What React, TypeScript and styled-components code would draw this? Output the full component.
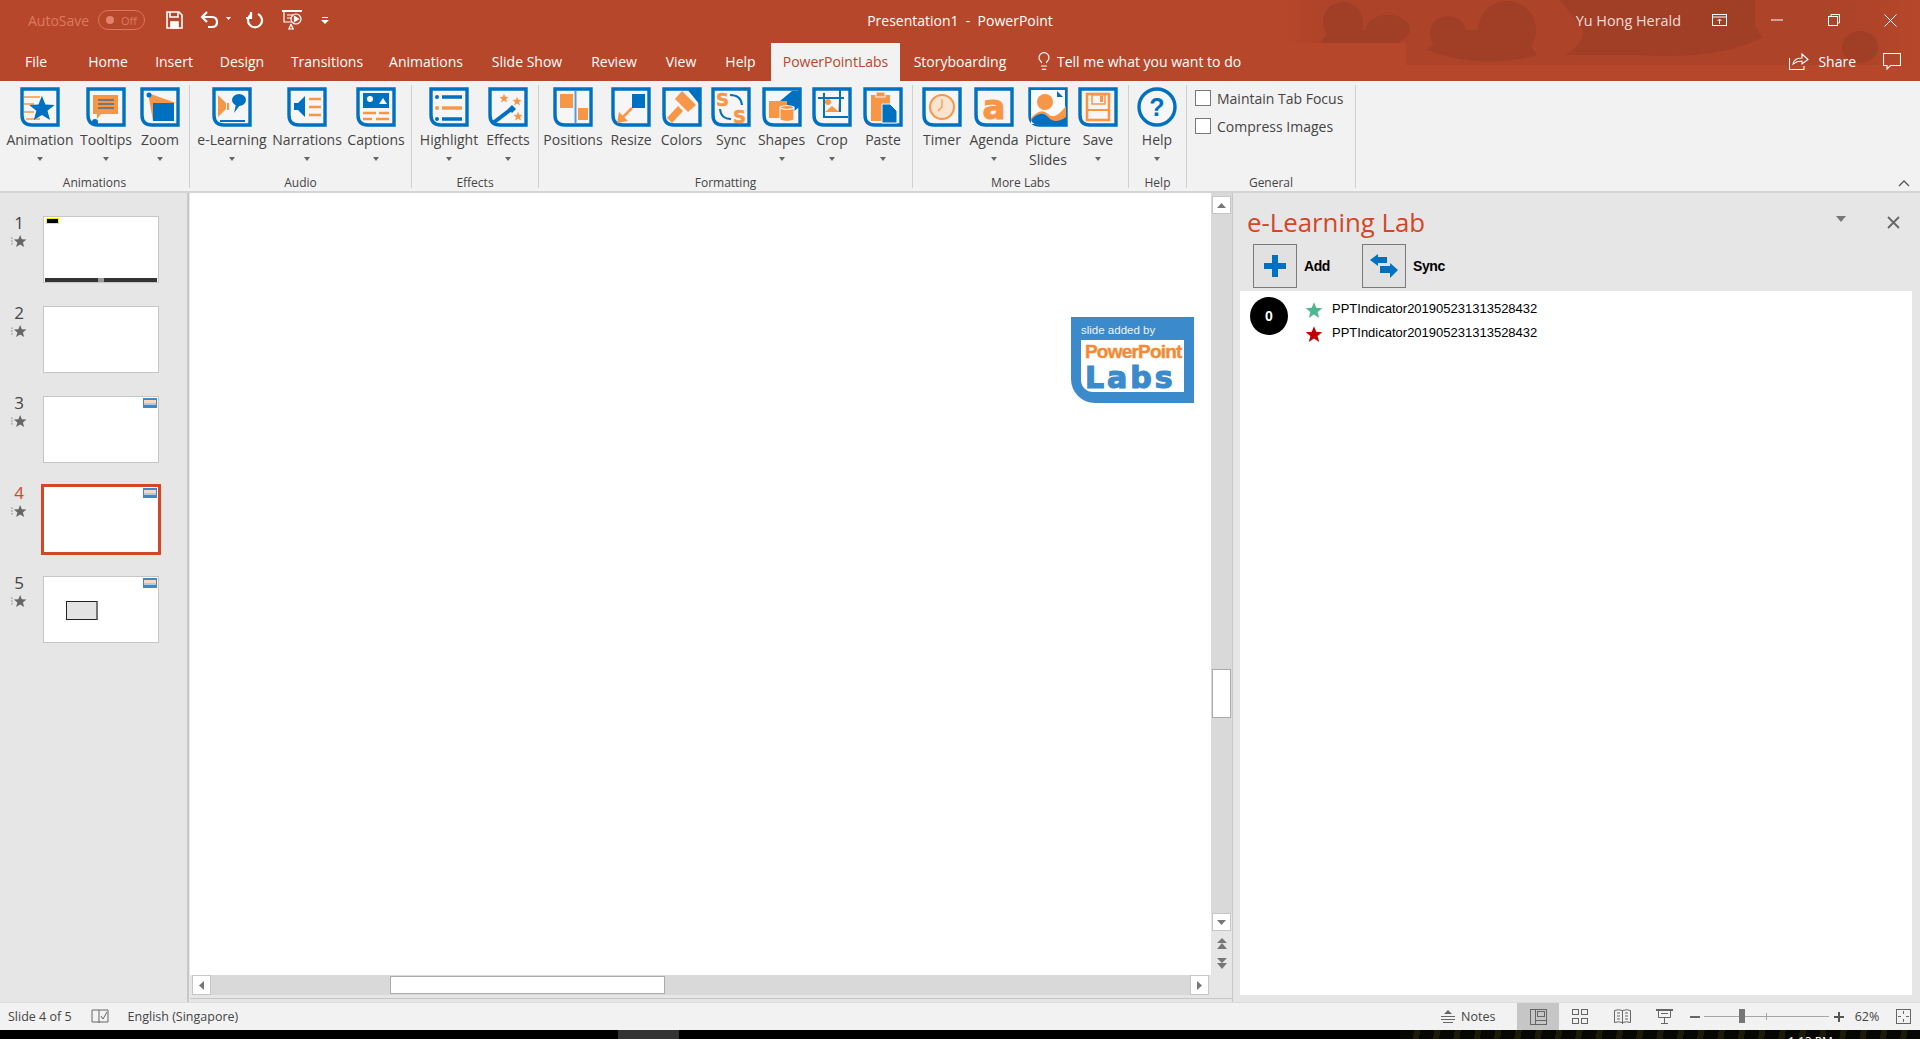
import React from 'react';
import styled, { createGlobalStyle } from 'styled-components';
import { Lightbulb } from 'lucide-react';

const BLUE = '#0070C0';
const ORANGE = '#F79646';
const STAR = '12,1.5 15,9 23,9.5 16.8,14.5 19,22.5 12,18 5,22.5 7.2,14.5 1,9.5 9,9';

const GlobalStyle = createGlobalStyle`
    html, body {
        margin: 0;
        padding: 0;
        background: #000;
    }
    body {
        font-family: 'Open Sans', 'Noto Sans', sans-serif;
        overflow: hidden;
    }
    * {
        box-sizing: border-box;
    }
`;

const Window = styled.div`
    display: flex;
    flex-direction: column;
    width: 1920px;
    height: 1039px;
    overflow: hidden;
`;

const Header = styled.header`
    position: relative;
    flex: none;
    height: 81px;
    background: #b7472a;
    color: #fff;
`;

const HeaderArt = styled.svg`
    position: absolute;
    top: 0;
    right: 0;
`;

const TitleBar = styled.div`
    position: relative;
    display: grid;
    grid-template-columns: 1fr auto 1fr;
    height: 43px;
    padding-bottom: 3px;
    align-items: center;
`;

const Qat = styled.div`
    display: flex;
    align-items: center;
    padding-left: 28px;
`;

const AutoSave = styled.span`
    width: 70px;
    font-size: 14px;
    color: #dc7a60;
`;

const Toggle = styled.div`
    display: flex;
    align-items: center;
    gap: 7px;
    width: 47px;
    height: 20px;
    padding-left: 7px;
    margin-right: 11px;
    border: 1px solid #d9765c;
    border-radius: 10px;
    font-size: 11px;
    color: #dc7a60;
`;

const ToggleDot = styled.i`
    width: 8px;
    height: 8px;
    border-radius: 50%;
    background: #e2826a;
`;

const QatButton = styled.div<{ $w: number }>`
    display: flex;
    align-items: center;
    justify-content: center;
    width: ${(p) => p.$w}px;
    height: 30px;
`;

const WindowTitle = styled.div`
    font-size: 14px;
    white-space: pre;
`;

const WindowRight = styled.div`
    display: flex;
    align-items: center;
    justify-content: flex-end;
    padding-right: 1px;
`;

const UserName = styled.span`
    margin-right: 31px;
    font-size: 14.4px;
    color: #f3dcd6;
`;

const DisplayOptions = styled.div`
    display: flex;
    margin-right: 21px;
`;

const WinButton = styled.div`
    display: flex;
    justify-content: center;
    width: 57px;
`;

const TabRow = styled.nav`
    position: relative;
    display: flex;
    height: 38px;
`;

const Tab = styled.div<{ $w: number; $active?: boolean }>`
    display: flex;
    align-items: center;
    justify-content: center;
    width: ${(p) => p.$w}px;
    padding-bottom: 2px;
    font-size: 14px;
    white-space: nowrap;
    background: ${(p) => (p.$active ? '#f2f2f2' : 'transparent')};
    color: ${(p) => (p.$active ? '#b7472a' : '#fff')};
`;

const TellMe = styled.div`
    display: flex;
    align-items: center;
    gap: 3px;
    margin-left: 14px;
    padding-bottom: 2px;
    font-size: 14px;
`;

const ShareBox = styled.div`
    display: flex;
    align-items: center;
    margin-left: auto;
    padding-right: 19px;
    padding-bottom: 2px;
    font-size: 14px;
`;

const ShareLabel = styled.span`
    margin: 0 27px 0 9px;
`;

const Ribbon = styled.section`
    display: flex;
    flex: none;
    height: 112px;
    padding-bottom: 1px;
    background: #f2f2f2;
    border-bottom: 2px solid #d4d4d4;
`;

const Group = styled.div<{ $w: number }>`
    display: flex;
    flex-direction: column;
    width: ${(p) => p.$w}px;
    height: 103px;
    margin-top: 4px;
    border-right: 1px solid #d0d0d0;
`;

const GroupButtons = styled.div<{ $pad: number }>`
    display: flex;
    flex: 1;
    padding: 2px 0 0 ${(p) => p.$pad}px;
`;

const GroupLabel = styled.div`
    margin-bottom: -3px;
    font-size: 12px;
    line-height: 16px;
    text-align: center;
    color: #444;
`;

const RibbonButton = styled.div<{ $w: number }>`
    display: flex;
    flex-direction: column;
    align-items: center;
    width: ${(p) => p.$w}px;
`;

const ButtonLabel = styled.div`
    margin-top: 3px;
    font-size: 14px;
    line-height: 20px;
    text-align: center;
    white-space: nowrap;
    color: #444;
`;

const Caret = styled.i`
    margin-top: 7px;
    border-top: 4px solid #666;
    border-left: 3.5px solid transparent;
    border-right: 3.5px solid transparent;
`;

const Checks = styled.div`
    display: flex;
    flex: 1;
    flex-direction: column;
    gap: 12px;
    padding: 5px 0 0 8px;
`;

const CheckRow = styled.label`
    display: flex;
    align-items: center;
    gap: 6px;
    height: 16px;
    font-size: 14px;
    color: #444;
`;

const CheckBox = styled.i`
    width: 16px;
    height: 16px;
    background: #fff;
    border: 1px solid #777;
`;

const Collapse = styled.div`
    margin: auto 10px 0 auto;
    padding-bottom: 3px;
    line-height: 0;
`;

const Workspace = styled.main`
    display: flex;
    flex: 1;
    min-height: 0;
    background: #e6e6e6;
`;

const SlidePanel = styled.aside`
    flex: none;
    width: 190px;
    padding-top: 23px;
    border-right: 1px solid #e6e6e6;
    box-shadow: inset -2px 0 0 #c8c8c8;
`;

const SlideRow = styled.div`
    display: flex;
    height: 90px;
`;

const SlideMeta = styled.div`
    display: flex;
    flex-direction: column;
    align-items: center;
    width: 43px;
    padding-right: 5px;
    margin-top: -2px;
`;

const SlideNumber = styled.span<{ $active?: boolean }>`
    margin-bottom: 2px;
    font-size: 17px;
    line-height: 18px;
    color: ${(p) => (p.$active ? '#d24726' : '#444')};
`;

const Thumb = styled.div<{ $active?: boolean }>`
    position: relative;
    width: 116px;
    height: 67px;
    background: #fff;
    border: 1px solid ${(p) => (p.$active ? '#d24726' : '#c6c6c6')};
    box-shadow: ${(p) => (p.$active ? '0 0 0 2px #d24726' : 'none')};
`;

const ThumbBadge = styled.i`
    position: absolute;
    top: 1px;
    right: 1px;
    width: 14px;
    height: 10px;
    border: 1px solid #3a8acc;
    background: linear-gradient(#3a8acc 15%, #f7d8c0 15%, #f7d8c0 50%, #a9cbe8 50%, #a9cbe8 75%, #3a8acc 75%);
`;

const ThumbTag = styled.i`
    position: absolute;
    top: 1px;
    left: 2px;
    width: 13px;
    height: 6px;
    background: #000;
    border: 1px solid #f2ee00;
`;

const ThumbFooter = styled.i`
    position: absolute;
    left: 1px;
    right: 1px;
    bottom: 0;
    height: 4px;
    background: linear-gradient(90deg, #333 47%, #999 47%, #999 53%, #333 53%);
`;

const ThumbShape = styled.i`
    position: absolute;
    left: 22px;
    top: 24px;
    width: 32px;
    height: 19px;
    background: #e3e3e3;
    border: 1px solid #222;
    border-right: 2px solid #777;
`;

const Editor = styled.div`
    display: flex;
    flex: none;
    flex-direction: column;
    width: 1043px;
    border-right: 1px solid #c6c6c6;
`;

const EditorBody = styled.div`
    display: flex;
    flex: 1;
    min-height: 0;
    margin-bottom: 3px;
    border-bottom: 1px solid #c6c6c6;
`;

const SlideColumn = styled.div`
    display: flex;
    flex: 1;
    flex-direction: column;
    min-width: 0;
    padding-bottom: 3px;
`;

const SlideArea = styled.div`
    display: flex;
    flex: 1;
    justify-content: flex-end;
    align-items: flex-start;
    padding: 124px 17px 0 0;
    background: #fff;
`;

const LabsLogo = styled.div`
    display: flex;
    flex-direction: column;
    width: 123px;
    height: 86px;
    padding: 6px 10px 0;
    background: #3a8acc;
    border-bottom-left-radius: 24px;
    color: #fff;
    font-family: 'Liberation Sans', sans-serif;
`;

const LogoCaption = styled.div`
    font-size: 11.5px;
    line-height: 15px;
    color: #eef5fb;
    white-space: nowrap;
`;

const LogoBox = styled.div`
    width: 103px;
    height: 52px;
    margin-top: 2px;
    padding-left: 4px;
    background: #fff;
    border-bottom-left-radius: 12px;
    font-weight: bold;
    text-align: left;
`;

const LogoTop = styled.div`
    font-size: 19px;
    line-height: 23px;
    letter-spacing: -0.8px;
    color: #f58a32;
    white-space: nowrap;
    -webkit-text-stroke: 0.4px #f58a32;
`;

const LogoBottom = styled.div`
    font-family: 'DejaVu Sans', sans-serif;
    font-size: 30px;
    line-height: 29px;
    letter-spacing: 3px;
    color: #3a8acc;
    -webkit-text-stroke: 1.2px #3a8acc;
`;

const HScroll = styled.div`
    display: flex;
    flex: none;
    height: 20px;
    padding-left: 2px;
    padding-right: 2px;
`;

const HTrack = styled.div`
    flex: 1;
    padding-left: 179px;
    background: #d9d9d9;
`;

const HThumb = styled.div`
    width: 275px;
    height: 18px;
    margin-top: 1px;
    background: #fff;
    border: 1px solid #ababab;
`;

const ScrollButton = styled.div<{ $w: number; $h: number }>`
    display: flex;
    flex: none;
    align-items: center;
    justify-content: center;
    width: ${(p) => p.$w}px;
    height: ${(p) => p.$h}px;
    background: #fff;
    border: 1px solid #c6c6c6;
`;

const VScroll = styled.div`
    display: flex;
    flex: none;
    flex-direction: column;
    align-items: center;
    width: 21px;
`;

const VTrack = styled.div`
    display: flex;
    flex: 1;
    flex-direction: column;
    align-items: center;
    width: 100%;
    padding-top: 3px;
    background: #d9d9d9;
`;

const VThumb = styled.div`
    width: 19px;
    height: 49px;
    margin-top: 455px;
    background: #fff;
    border: 1px solid #ababab;
`;

const SlideNav = styled.div`
    display: flex;
    flex: none;
    flex-direction: column;
    align-items: center;
    gap: 9px;
    height: 67px;
    padding-top: 7px;
`;

const Pane = styled.aside`
    display: flex;
    flex: 1;
    flex-direction: column;
    min-width: 0;
    padding: 0 8px 7px 14px;
`;

const PaneHead = styled.div`
    display: flex;
    align-items: center;
    height: 51px;
    padding: 7px 20px 0 0;
    margin-right: -8px;
`;

const PaneTitle = styled.h2`
    flex: 1;
    margin: 0;
    font-size: 25.8px;
    font-weight: 400;
    color: #d24726;
`;

const PaneMenu = styled.i`
    margin: -6px 41px 0 0;
    border-top: 6px solid #777;
    border-left: 5px solid transparent;
    border-right: 5px solid transparent;
`;

const PaneTools = styled.div`
    display: flex;
    align-items: flex-start;
    height: 47px;
    padding-left: 6px;
`;

const ToolBox = styled.div`
    display: flex;
    align-items: center;
    justify-content: center;
    width: 44px;
    height: 44px;
    background: #e1e1e1;
    border: 1px solid #7a7a7a;
`;

const ToolLabel = styled.span<{ $w: number }>`
    width: ${(p) => p.$w}px;
    margin-left: 7px;
    font-family: 'Liberation Sans', sans-serif;
    font-size: 14px;
    font-weight: bold;
    line-height: 44px;
    letter-spacing: -0.4px;
    color: #000;
`;

const SyncList = styled.div`
    display: flex;
    flex: 1;
    gap: 17px;
    margin-left: -7px;
    padding: 6px 0 0 10px;
    background: #fff;
`;

const IndexBadge = styled.div`
    display: flex;
    align-items: center;
    justify-content: center;
    width: 38px;
    height: 38px;
    border-radius: 50%;
    background: #000;
    color: #fff;
    font-family: 'Liberation Sans', sans-serif;
    font-size: 14px;
    font-weight: bold;
`;

const IndicatorList = styled.div`
    display: flex;
    flex-direction: column;
    gap: 4px;
    padding-top: 1px;
`;

const IndicatorRow = styled.div`
    display: flex;
    align-items: center;
    gap: 9px;
    height: 20px;
    font-family: 'Liberation Sans', sans-serif;
    font-size: 13px;
    color: #000;
`;

const IndicatorStar = styled.span`
    display: flex;
    margin-top: 3px;
`;

const StatusBar = styled.footer`
    display: flex;
    flex: none;
    align-items: center;
    height: 28px;
    padding-left: 8px;
    background: #f2f2f2;
    border-top: 1px solid #dcdcdc;
    font-size: 12.5px;
    color: #444;
`;

const StatusIcon = styled.div<{ $w: number }>`
    display: flex;
    flex: none;
    align-items: center;
    justify-content: center;
    width: ${(p) => p.$w}px;
`;

const NotesLabel = styled.span`
    width: 62px;
    padding-left: 6px;
`;

const ViewButton = styled(StatusIcon) <{ $active?: boolean }>`
    align-self: stretch;
    background: ${(p) => (p.$active ? '#c6c6c6' : 'transparent')};
`;

const StatusRight = styled.div`
    display: flex;
    align-self: stretch;
    align-items: center;
    margin-left: auto;
`;

const ZoomTrack = styled.div`
    position: relative;
    width: 125px;
    height: 1px;
    background: #a6a6a6;
`;

const ZoomThumb = styled.i`
    position: absolute;
    top: -7px;
    left: 35px;
    width: 6px;
    height: 14px;
    background: #767676;
`;

const ZoomMark = styled.i`
    position: absolute;
    top: -3px;
    left: 62px;
    width: 1px;
    height: 7px;
    background: #a6a6a6;
`;

const Taskbar = styled.div`
    display: flex;
    flex: none;
    height: 9px;
    overflow: hidden;
    background: #000;
`;

const TaskItem = styled.div`
    width: 61px;
    margin-left: 618px;
    background: #333;
`;

const Wallpaper = styled.div`
    position: relative;
    width: 520px;
    margin-left: auto;
    background: repeating-linear-gradient(100deg, #060603 0 14px, #1b1b08 14px 20px);
`;

const Clock = styled.span`
    position: absolute;
    left: 388px;
    top: 5px;
    font-size: 12px;
    line-height: 14px;
    color: #fff;
`;

const Frame = ({ children }: { children?: React.ReactNode }) => (
    <svg width="40" height="40" viewBox="0 0 40 40">
        <path d="M2 2H38V38H12Q2 38 2 28Z" fill="#f6f6f6" stroke={BLUE} strokeWidth="3.4" />
        {children}
    </svg>
);

const Star = ({ size, color }: { size: number; color: string }) => (
    <svg width={size} height={size} viewBox="0 0 24 24">
        <polygon points={STAR} fill={color} />
    </svg>
);

// animated slide marker: grey star with a few dashes trailing on its left
const SlideStar = () => (
    <svg width="16" height="14" viewBox="0 0 28 24">
        <polygon transform="translate(4 0)" points={STAR} fill="#666" />
        <path d="M0 7H3M0 12H3M0 17H3" stroke="#888" strokeWidth="1.6" />
    </svg>
);

const ICONS: Record<string, React.ReactNode> = {
    Animation: (
        <Frame>
            <path d="M4 10H20M4 17H14M4 25H14M6 32H20" stroke={ORANGE} strokeWidth="1.6" />
            <polygon transform="translate(8 7) scale(1.16)" points={STAR} fill={BLUE} />
        </Frame>
    ),
    Tooltips: (
        <Frame>
            <path d="M7 8H32V27H15L11 32L11 27H7Z" fill={ORANGE} />
            <path d="M12 13H28M12 17H28M12 21H28" stroke="#777" strokeWidth="2" />
            <circle cx="9" cy="35" r="3" fill={BLUE} />
        </Frame>
    ),
    Zoom: (
        <Frame>
            <path d="M8 6L36 16H14L13 34Z" fill={ORANGE} />
            <rect x="13" y="16" width="21" height="18" fill={BLUE} />
            <circle cx="9" cy="8" r="2.5" fill={BLUE} />
        </Frame>
    ),
    'e-Learning': (
        <Frame>
            <path d="M6 8L14 16V22L6 30Z" fill={ORANGE} />
            <rect x="15" y="16" width="2" height="7" fill={ORANGE} />
            <ellipse cx="27" cy="13" rx="7" ry="6" fill={BLUE} />
            <path d="M22 26L24 17L28 18Z" fill={BLUE} />
            <path d="M8 34H33" stroke={BLUE} strokeWidth="2" />
        </Frame>
    ),
    Narrations: (
        <Frame>
            <path d="M7 16H11L18 9V30L11 23H7Z" fill={BLUE} />
            <path d="M22 12H34M22 20H34M22 28H34" stroke={ORANGE} strokeWidth="2.4" />
        </Frame>
    ),
    Captions: (
        <Frame>
            <rect x="7" y="6" width="26" height="15" fill={BLUE} />
            <circle cx="14" cy="12" r="3" fill="#fff" />
            <path d="M23 17L27 11L31 17Z" fill="#fff" />
            <path d="M7 26H20M23 26H33M7 32H16M20 32H33" stroke={ORANGE} strokeWidth="2.4" />
        </Frame>
    ),
    Highlight: (
        <Frame>
            <path d="M13 10H33M13 32H33" stroke={BLUE} strokeWidth="3.4" />
            <path d="M13 21H33" stroke={ORANGE} strokeWidth="3.4" />
            <circle cx="8" cy="10" r="2" fill={BLUE} />
            <circle cx="8" cy="21" r="2" fill={ORANGE} />
            <circle cx="8" cy="32" r="2" fill={BLUE} />
        </Frame>
    ),
    Effects: (
        <Frame>
            <polygon transform="translate(11 6) scale(0.42)" points={STAR} fill={ORANGE} />
            <polygon transform="translate(24 9) scale(0.42)" points={STAR} fill={ORANGE} />
            <polygon transform="translate(25 24) scale(0.42)" points={STAR} fill={ORANGE} />
            <path d="M5 36L22 23" stroke={BLUE} strokeWidth="4" />
            <path d="M20 22L24 18L28 22L24 26Z" fill={BLUE} />
        </Frame>
    ),
    Positions: (
        <Frame>
            <rect x="7" y="7" width="13" height="14" fill={ORANGE} />
            <rect x="25" y="21" width="10" height="12" fill={ORANGE} />
            <path d="M22.5 4V36" stroke="#5b9bd5" strokeWidth="2" />
        </Frame>
    ),
    Resize: (
        <Frame>
            <rect x="21" y="7" width="13" height="14" fill={BLUE} />
            <path d="M21 21L8 34" stroke={ORANGE} strokeWidth="2.6" />
            <path d="M6 36L8 25L17 34Z" fill={ORANGE} />
        </Frame>
    ),
    Colors: (
        <Frame>
            <path d="M25 2H38V18Z" fill={BLUE} />
            <path d="M20 4L34 18L26 25L13 12Z" fill={ORANGE} />
            <path d="M16 19L21 24L10 36L5 31Z" fill={ORANGE} />
        </Frame>
    ),
    Sync: (
        <Frame>
            <text x="5" y="19" fontFamily="DejaVu Sans" fontWeight="bold" fontSize="18" fill={ORANGE} stroke={ORANGE} strokeWidth="0.5">S</text>
            <text x="22" y="36" fontFamily="DejaVu Sans" fontWeight="bold" fontSize="18" fill={ORANGE} stroke={ORANGE} strokeWidth="0.5">S</text>
            <path d="M19 8Q30 8 31 18" fill="none" stroke={BLUE} strokeWidth="2" />
            <path d="M9 22Q10 32 20 32" fill="none" stroke={BLUE} strokeWidth="2" />
        </Frame>
    ),
    Shapes: (
        <Frame>
            <path d="M18 14L30 4H37V20L29 27Z" fill={BLUE} />
            <rect x="7" y="14" width="18" height="17" fill={ORANGE} />
            <path d="M18 20Q25 17 32 20V33Q25 36 18 33Z" fill={ORANGE} stroke="#f6f6f6" strokeWidth="1.2" />
            <path d="M18 21Q25 24 32 21" fill="none" stroke="#f6f6f6" strokeWidth="1.2" />
        </Frame>
    ),
    Crop: (
        <Frame>
            <path d="M12 6V30H36M28 3V25M6 11H32" stroke={BLUE} strokeWidth="2" fill="none" />
            <circle cx="16" cy="15" r="3" fill={ORANGE} />
            <path d="M13 25L20 19L26 24V13L27 25Z" fill={ORANGE} />
        </Frame>
    ),
    Paste: (
        <Frame>
            <rect x="8" y="8" width="19" height="26" fill={ORANGE} />
            <rect x="13" y="5" width="9" height="5" fill={ORANGE} stroke="#f6f6f6" strokeWidth="1" />
            <path d="M19 17H27L34 24V36H19Z" fill={BLUE} stroke="#f6f6f6" strokeWidth="1" />
        </Frame>
    ),
    Timer: (
        <Frame>
            <circle cx="20" cy="20" r="12" fill="#fbe3cf" stroke={ORANGE} strokeWidth="2" />
            <path d="M20 12V20L16 24" fill="none" stroke={ORANGE} strokeWidth="1.2" />
        </Frame>
    ),
    Agenda: (
        <Frame>
            <text x="20" y="32" textAnchor="middle" fontFamily="DejaVu Sans" fontWeight="bold" fontSize="34" fill={ORANGE} stroke={ORANGE} strokeWidth="1">a</text>
        </Frame>
    ),
    Picture: (
        <Frame>
            <rect x="3" y="3" width="34" height="34" fill="#fbfbfb" />
            <circle cx="17" cy="15" r="8" fill={ORANGE} />
            <path d="M3 31Q13 20 20 27T38 19V38H12Q3 38 3 30Z" fill={ORANGE} />
            <path d="M3 33Q13 22 20 30T38 30V38H12Q5 38 3 33Z" fill={BLUE} />
            <path d="M29 4L35 10H29Z" fill={BLUE} />
        </Frame>
    ),
    Save: (
        <Frame>
            <rect x="9" y="7" width="22" height="26" fill="#f6f6f6" stroke={ORANGE} strokeWidth="2.6" />
            <rect x="14" y="8" width="13" height="9" fill="#f6f6f6" stroke={ORANGE} strokeWidth="1.5" />
            <rect x="22" y="9" width="3" height="6" fill={ORANGE} />
            <path d="M9 23H31" stroke={ORANGE} strokeWidth="2" />
        </Frame>
    ),
    Help: (
        <svg width="40" height="40" viewBox="0 0 40 40">
            <circle cx="20" cy="20" r="18" fill="#f6f6f6" stroke={BLUE} strokeWidth="3.4" />
            <text x="20" y="29" textAnchor="middle" fontFamily="Liberation Sans" fontWeight="bold" fontSize="25" fill={BLUE}>?</text>
        </svg>
    ),
};

type RibbonItem = { name: string; w: number; caret?: boolean; second?: string };

const GROUPS: { label: string; w: number; pad: number; items: RibbonItem[] }[] = [
    {
        label: 'Animations',
        w: 190,
        pad: 4,
        items: [
            { name: 'Animation', w: 72, caret: true },
            { name: 'Tooltips', w: 60, caret: true },
            { name: 'Zoom', w: 48, caret: true },
        ],
    },
    {
        label: 'Audio',
        w: 222,
        pad: 6,
        items: [
            { name: 'e-Learning', w: 72, caret: true },
            { name: 'Narrations', w: 78, caret: true },
            { name: 'Captions', w: 60, caret: true },
        ],
    },
    {
        label: 'Effects',
        w: 127,
        pad: 4,
        items: [
            { name: 'Highlight', w: 66, caret: true },
            { name: 'Effects', w: 52, caret: true },
        ],
    },
    {
        label: 'Formatting',
        w: 374,
        pad: 2,
        items: [
            { name: 'Positions', w: 64 },
            { name: 'Resize', w: 52 },
            { name: 'Colors', w: 49 },
            { name: 'Sync', w: 50 },
            { name: 'Shapes', w: 51, caret: true },
            { name: 'Crop', w: 50, caret: true },
            { name: 'Paste', w: 52, caret: true },
        ],
    },
    {
        label: 'More Labs',
        w: 216,
        pad: 5,
        items: [
            { name: 'Timer', w: 48 },
            { name: 'Agenda', w: 56, caret: true },
            { name: 'Picture', w: 52, second: 'Slides' },
            { name: 'Save', w: 48, caret: true },
        ],
    },
    {
        label: 'Help',
        w: 58,
        pad: 4,
        items: [{ name: 'Help', w: 48, caret: true }],
    },
];

const TABS = [
    { name: 'File', w: 72 },
    { name: 'Home', w: 72 },
    { name: 'Insert', w: 60 },
    { name: 'Design', w: 76 },
    { name: 'Transitions', w: 94 },
    { name: 'Animations', w: 104 },
    { name: 'Slide Show', w: 98 },
    { name: 'Review', w: 76 },
    { name: 'View', w: 58 },
    { name: 'Help', w: 61 },
    { name: 'PowerPointLabs', w: 129, active: true },
    { name: 'Storyboarding', w: 120 },
];

const SLIDES = [1, 2, 3, 4, 5];

const Art = () => (
    <HeaderArt width="640" height="65" viewBox="1280 0 640 65">
        <defs>
            <linearGradient id="fade" x1="0" x2="1" y1="0" y2="0">
                <stop offset="0" stopColor="#ad4329" stopOpacity="0" />
                <stop offset="0.08" stopColor="#ad4329" />
                <stop offset="0.9" stopColor="#ad4329" />
                <stop offset="1" stopColor="#b7472a" />
            </linearGradient>
        </defs>
        <path d="M1280 0H1920V65H1406V43H1280Z" fill="url(#fade)" />
        <g fill="#a03e26">
            <circle cx="1343" cy="22" r="20" />
            <ellipse cx="1388" cy="29" rx="22" ry="14" />
            <path d="M1320 43L1330 30H1400V43Z" />
            <ellipse cx="1448" cy="33" rx="18" ry="17" />
            <circle cx="1507" cy="30" r="29" />
            <path d="M1427 50Q1480 70 1537 55L1520 30H1450Z" />
            <path d="M1560 0H1755V25Q1760 35 1763 37Q1720 60 1640 55L1565 55Q1590 40 1580 25Z" />
            <ellipse cx="1860" cy="47" rx="18" ry="16" />
        </g>
    </HeaderArt>
);

const App = (): JSX.Element => {
    return (
        <Window>
            <GlobalStyle />
            <Header>
                <Art />
                <TitleBar>
                    <Qat>
                        <AutoSave>AutoSave</AutoSave>
                        <Toggle>
                            <ToggleDot />
                            Off
                        </Toggle>
                        <QatButton $w={36}>
                            <svg width="17" height="18" viewBox="0 0 17 18" fill="none" stroke="#fff" strokeWidth="1.6">
                                <path d="M1 1H13L16 4V17H1Z" />
                                <path d="M4 1V6H12V1" />
                                <rect x="5" y="11" width="7" height="6" fill="#fff" />
                            </svg>
                        </QatButton>
                        <QatButton $w={48}>
                            <svg width="33" height="18" viewBox="0 0 33 18" fill="none" stroke="#fff" strokeWidth="2.2">
                                <path d="M3 6H12Q17 6 17 11T12 16H8" />
                                <path d="M7 1L2 6L7 11" />
                                <path d="M26 6H31L28.5 9Z" fill="#fff" stroke="none" />
                            </svg>
                        </QatButton>
                        <QatButton $w={30}>
                            <svg width="18" height="18" viewBox="0 0 18 18" fill="none" stroke="#fff" strokeWidth="2.2">
                                <path d="M6 3A7 7 0 1 0 12 3" />
                                <path d="M5 0V6H0" transform="translate(0 1)" />
                            </svg>
                        </QatButton>
                        <QatButton $w={44}>
                            <svg width="21" height="20" viewBox="0 0 21 20" fill="none" stroke="#fff" strokeWidth="1.2">
                                <path d="M0 1H20" strokeWidth="2" />
                                <path d="M2 2V12H10M5 5H11M5 8H9" />
                                <circle cx="14" cy="9" r="5" />
                                <path d="M12.5 6.5L16.5 9L12.5 11.5Z" fill="#fff" />
                                <path d="M6 19H12M9 14L7 19M9 14L11 19" />
                            </svg>
                        </QatButton>
                        <QatButton $w={22}>
                            <svg width="8" height="7" viewBox="0 0 8 7" fill="#fff">
                                <rect x="1" y="0" width="6" height="1" />
                                <path d="M0 3H8L4 7Z" />
                            </svg>
                        </QatButton>
                    </Qat>
                    <WindowTitle>Presentation1  -  PowerPoint</WindowTitle>
                    <WindowRight>
                        <UserName>Yu Hong Herald</UserName>
                        <DisplayOptions>
                            <svg width="15" height="12" viewBox="0 0 15 12" fill="none" stroke="#fff" strokeWidth="1">
                                <rect x="0.5" y="0.5" width="14" height="11" />
                                <path d="M0 3H15M7.5 10V5M5.5 7L7.5 5L9.5 7" />
                            </svg>
                        </DisplayOptions>
                        <WinButton>
                            <svg width="12" height="2" viewBox="0 0 12 2">
                                <path d="M0 1H12" stroke="#fff" />
                            </svg>
                        </WinButton>
                        <WinButton>
                            <svg width="12" height="12" viewBox="0 0 12 12" fill="none" stroke="#fff">
                                <rect x="0.5" y="2.5" width="9" height="9" />
                                <path d="M3 2.5V0.5H11.5V9H9.5" />
                            </svg>
                        </WinButton>
                        <WinButton>
                            <svg width="13" height="13" viewBox="0 0 13 13">
                                <path d="M0.5 0.5L12.5 12.5M12.5 0.5L0.5 12.5" stroke="#fff" />
                            </svg>
                        </WinButton>
                    </WindowRight>
                </TitleBar>
                <TabRow>
                    {TABS.map((tab) => (
                        <Tab key={tab.name} $w={tab.w} $active={tab.active}>
                            {tab.name}
                        </Tab>
                    ))}
                    <TellMe>
                        <Lightbulb size={20} strokeWidth={1.4} />
                        Tell me what you want to do
                    </TellMe>
                    <ShareBox>
                        <svg width="20" height="18" viewBox="0 0 20 18" fill="none" stroke="#fff" strokeWidth="1.1">
                            <path d="M0.5 6V17.5H15V14" />
                            <path d="M4 12Q5 6 13 6V2L19 7.5L13 12V9Q8 9 4 12Z" />
                        </svg>
                        <ShareLabel>Share</ShareLabel>
                        <svg width="18" height="17" viewBox="0 0 18 17" fill="none" stroke="#fff" strokeWidth="1.1">
                            <path d="M0.5 0.5H17.5V12.5H7.5L4 16V12.5H0.5Z" />
                        </svg>
                    </ShareBox>
                </TabRow>
            </Header>
            <Ribbon>
                {GROUPS.map((group) => (
                    <Group key={group.label} $w={group.w}>
                        <GroupButtons $pad={group.pad}>
                            {group.items.map((item) => (
                                <RibbonButton key={item.name} $w={item.w}>
                                    {ICONS[item.name]}
                                    <ButtonLabel>
                                        {item.name}
                                        {item.second && <br />}
                                        {item.second}
                                    </ButtonLabel>
                                    {item.caret && <Caret />}
                                </RibbonButton>
                            ))}
                        </GroupButtons>
                        <GroupLabel>{group.label}</GroupLabel>
                    </Group>
                ))}
                <Group $w={169}>
                    <Checks>
                        <CheckRow>
                            <CheckBox />
                            Maintain Tab Focus
                        </CheckRow>
                        <CheckRow>
                            <CheckBox />
                            Compress Images
                        </CheckRow>
                    </Checks>
                    <GroupLabel>General</GroupLabel>
                </Group>
                <Collapse>
                    <svg width="12" height="7" viewBox="0 0 12 7" fill="none" stroke="#555" strokeWidth="1.3">
                        <path d="M1 6L6 1L11 6" />
                    </svg>
                </Collapse>
            </Ribbon>
            <Workspace>
                <SlidePanel>
                    {SLIDES.map((n) => (
                        <SlideRow key={n}>
                            <SlideMeta>
                                <SlideNumber $active={n === 4}>{n}</SlideNumber>
                                <SlideStar />
                            </SlideMeta>
                            <Thumb $active={n === 4}>
                                {n === 1 && <ThumbTag />}
                                {n === 1 && <ThumbFooter />}
                                {n >= 3 && <ThumbBadge />}
                                {n === 5 && <ThumbShape />}
                            </Thumb>
                        </SlideRow>
                    ))}
                </SlidePanel>
                <Editor>
                    <EditorBody>
                        <SlideColumn>
                            <SlideArea>
                                <LabsLogo>
                                    <LogoCaption>slide added by</LogoCaption>
                                    <LogoBox>
                                        <LogoTop>PowerPoint</LogoTop>
                                        <LogoBottom>Labs</LogoBottom>
                                    </LogoBox>
                                </LabsLogo>
                            </SlideArea>
                            <HScroll>
                                <ScrollButton $w={19} $h={20}>
                                    <svg width="5" height="9" viewBox="0 0 5 9">
                                        <path d="M5 0V9L0 4.5Z" fill="#777" />
                                    </svg>
                                </ScrollButton>
                                <HTrack>
                                    <HThumb />
                                </HTrack>
                                <ScrollButton $w={19} $h={20}>
                                    <svg width="5" height="9" viewBox="0 0 5 9">
                                        <path d="M0 0V9L5 4.5Z" fill="#777" />
                                    </svg>
                                </ScrollButton>
                            </HScroll>
                        </SlideColumn>
                        <VScroll>
                            <VTrack>
                                <ScrollButton $w={19} $h={18}>
                                    <svg width="9" height="5" viewBox="0 0 9 5">
                                        <path d="M0 5H9L4.5 0Z" fill="#777" />
                                    </svg>
                                </ScrollButton>
                                <VThumb />
                            </VTrack>
                            <ScrollButton $w={19} $h={18}>
                                <svg width="9" height="5" viewBox="0 0 9 5">
                                    <path d="M0 0H9L4.5 5Z" fill="#777" />
                                </svg>
                            </ScrollButton>
                            <SlideNav>
                                <svg width="10" height="11" viewBox="0 0 10 11" fill="#777">
                                    <path d="M5 0L10 5H0ZM5 5L10 11H0Z" />
                                </svg>
                                <svg width="10" height="11" viewBox="0 0 10 11" fill="#777">
                                    <path d="M0 0H10L5 5ZM0 5H10L5 11Z" />
                                </svg>
                            </SlideNav>
                        </VScroll>
                    </EditorBody>
                </Editor>
                <Pane>
                    <PaneHead>
                        <PaneTitle>e-Learning Lab</PaneTitle>
                        <PaneMenu />
                        <svg width="13" height="13" viewBox="0 0 13 13">
                            <path d="M1 1L12 12M12 1L1 12" stroke="#666" strokeWidth="1.8" />
                        </svg>
                    </PaneHead>
                    <PaneTools>
                        <ToolBox>
                            <svg width="24" height="24" viewBox="0 0 24 24">
                                <path d="M9 1H15V9H23V15H15V23H9V15H1V9H9Z" fill={BLUE} />
                            </svg>
                        </ToolBox>
                        <ToolLabel $w={58}>Add</ToolLabel>
                        <ToolBox>
                            <svg width="28" height="24" viewBox="0 0 28 24" fill={BLUE}>
                                <path d="M0 6L8 0V3H17V9H8V12Z" />
                                <path d="M28 16L20 9V12H10V19H20V24Z" />
                            </svg>
                        </ToolBox>
                        <ToolLabel $w={44}>Sync</ToolLabel>
                    </PaneTools>
                    <SyncList>
                        <IndexBadge>0</IndexBadge>
                        <IndicatorList>
                            <IndicatorRow>
                                <IndicatorStar>
                                    <Star size={18} color="#4db78f" />
                                </IndicatorStar>
                                PPTIndicator201905231313528432
                            </IndicatorRow>
                            <IndicatorRow>
                                <IndicatorStar>
                                    <Star size={18} color="#c00000" />
                                </IndicatorStar>
                                PPTIndicator201905231313528432
                            </IndicatorRow>
                        </IndicatorList>
                    </SyncList>
                </Pane>
            </Workspace>
            <StatusBar>
                Slide 4 of 5
                <StatusIcon $w={56}>
                    <svg width="18" height="15" viewBox="0 0 18 15" fill="none" stroke="#666" strokeWidth="1">
                        <path d="M8 1H1V13H8M8 1V14M8 1H17V13H8" />
                        <path d="M10 7L12 10L16 3" />
                    </svg>
                </StatusIcon>
                English (Singapore)
                <StatusRight>
                    <svg width="14" height="13" viewBox="0 0 14 13" fill="#666">
                        <path d="M7 0L11 4H3Z" />
                        <rect x="0" y="6" width="14" height="1" />
                        <rect x="0" y="9" width="14" height="1" />
                        <rect x="2" y="12" width="10" height="1" />
                    </svg>
                    <NotesLabel>Notes</NotesLabel>
                    <ViewButton $w={42} $active>
                        <svg width="17" height="16" viewBox="0 0 17 16" fill="none" stroke="#666">
                            <rect x="0.5" y="0.5" width="16" height="15" />
                            <path d="M5.5 0.5V15.5M5.5 11.5H16.5" />
                            <rect x="7.5" y="2.5" width="7" height="5" />
                        </svg>
                    </ViewButton>
                    <ViewButton $w={42}>
                        <svg width="16" height="15" viewBox="0 0 16 15" fill="none" stroke="#666">
                            <rect x="0.5" y="0.5" width="6" height="5" />
                            <rect x="9.5" y="0.5" width="6" height="5" />
                            <rect x="0.5" y="9.5" width="6" height="5" />
                            <rect x="9.5" y="9.5" width="6" height="5" />
                        </svg>
                    </ViewButton>
                    <ViewButton $w={42}>
                        <svg width="17" height="16" viewBox="0 0 17 16" fill="none" stroke="#666">
                            <path d="M8.5 1.5Q4 0 0.5 1.5V13.5Q4 12 8.5 13.5Q13 12 16.5 13.5V1.5Q13 0 8.5 1.5V15" />
                            <path d="M3 4H6M3 7H6M3 10H6M11 4H14M11 7H14M11 10H14" />
                        </svg>
                    </ViewButton>
                    <ViewButton $w={42}>
                        <svg width="17" height="15" viewBox="0 0 17 15" fill="none" stroke="#666">
                            <path d="M0 1H17" strokeWidth="2" />
                            <path d="M2.5 1V8.5H14.5V1M8.5 8.5V14M5 14.5H12M5 4.5H12" />
                        </svg>
                    </ViewButton>
                    <StatusIcon $w={19}>
                        <svg width="10" height="2" viewBox="0 0 10 2">
                            <rect width="10" height="2" fill="#666" />
                        </svg>
                    </StatusIcon>
                    <ZoomTrack>
                        <ZoomMark />
                        <ZoomThumb />
                    </ZoomTrack>
                    <StatusIcon $w={19}>
                        <svg width="10" height="10" viewBox="0 0 10 10">
                            <path d="M0 5H10M5 0V10" stroke="#555" strokeWidth="2" />
                        </svg>
                    </StatusIcon>
                    <StatusIcon $w={38}>62%</StatusIcon>
                    <StatusIcon $w={34}>
                        <svg width="15" height="15" viewBox="0 0 15 15" fill="none" stroke="#666">
                            <rect x="0.5" y="0.5" width="14" height="14" />
                            <path d="M7.5 2V5M7.5 10V13M2 7.5H5M10 7.5H13" />
                        </svg>
                    </StatusIcon>
                </StatusRight>
            </StatusBar>
            <Taskbar>
                <TaskItem />
                <Wallpaper>
                    <Clock>1:13 PM</Clock>
                </Wallpaper>
            </Taskbar>
        </Window>
    );
};

export default App;
